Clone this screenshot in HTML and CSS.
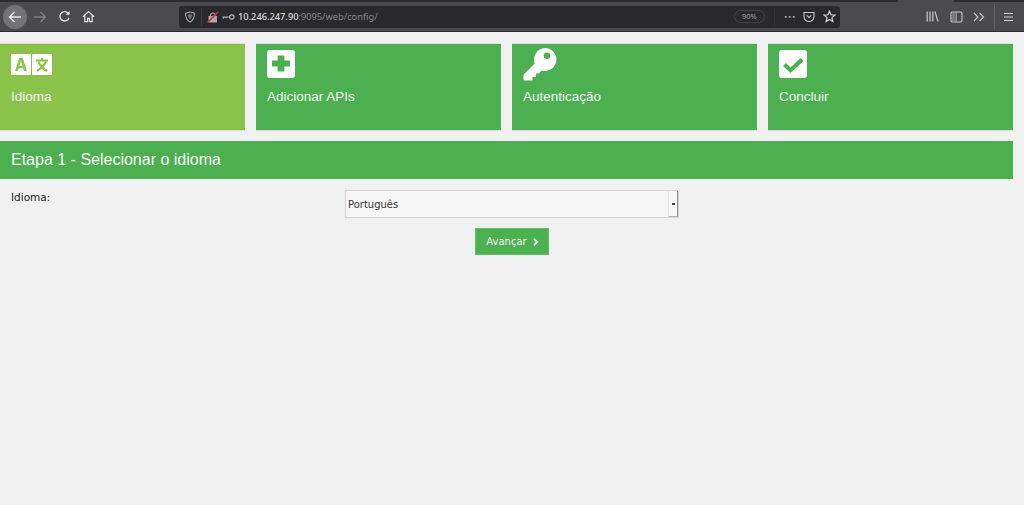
FILE: index.html
```html
<!DOCTYPE html>
<html lang="pt">
<head>
    <meta charset="UTF-8">
    <meta name="viewport" content="width=device-width, initial-scale=1.0">
    <title>Configuração</title>
    <link rel="stylesheet" href="styles.css">
</head>
<body>
    <!-- barra do navegador -->
    <header class="browser">
        <div class="tabstrip"><span class="tab-gap"></span></div>
        <div class="toolbar">
            <span class="back-btn">
                <svg width="16" height="16" viewBox="0 0 16 16" fill="none" stroke="#e8e8e8" stroke-width="1.4"><path d="M14 8H2.5M7.5 3 2.5 8l5 5"/></svg>
            </span>
            <svg class="tool-icon forward" width="16" height="16" viewBox="0 0 16 16" fill="none" stroke="#7f7f84" stroke-width="1.3"><path d="M2 8h11.5M8.5 3l5 5-5 5"/></svg>
            <svg class="tool-icon reload" width="13" height="13" viewBox="0 0 14 14" fill="none" stroke="#e4e4e4" stroke-width="1.5"><path d="M11.8 8.500A5 5 0 1 1 10.6 3.2L12 4.6"/><path d="M12.4 1v4.2H8.2" fill="#e4e4e4" stroke="none"/></svg>
            <svg class="tool-icon home" width="13" height="13" viewBox="0 0 14 14" fill="none" stroke="#e4e4e4" stroke-width="1.3"><path d="M1 7.2 7 1.6l6 5.6M3 6v6.6h3V9h2v3.6h3V6"/></svg>
            <div class="urlbar">
                <svg class="shield" width="12" height="12" viewBox="0 0 12 12" fill="none" stroke="#a9a9ac" stroke-width="1.1"><path d="M1.5 2.2 6 1l4.5 1.2c0 4-1 7-4.500 8.800C2.500 9.200 1.500 6.200 1.500 2.200z"/><path d="M4 3.500h4c0 2-.5 3.500-2 4.800C4.500 7 4 5.500 4 3.500z" fill="#77777a" stroke="none"/></svg>
                <span class="url-sep"></span>
                <svg class="lock" width="12" height="12" viewBox="0 0 12 12"><rect x="1.5" y="5" width="8.5" height="6.5" fill="#a8a8ab"/><path d="M3.5 5V3.800a2.300 2.300 0 0 1 4.500 0V5" fill="none" stroke="#a8a8ab" stroke-width="1.2"/><path d="M0.5 11.500 11 1" stroke="#e0294a" stroke-width="1.5"/></svg>
                <svg class="key" width="13" height="8" viewBox="0 0 13 8" fill="none" stroke="#bcbcbe" stroke-width="1.2"><circle cx="9.8" cy="4" r="2.2"/><path d="M0.5 4h7M1.500 4v1.800M4 4v1.300"/></svg>
                <span class="url"><b>10.246.247.90</b>:9095/web/config/</span>
                <span class="zoom-pill">90%</span>
                <span class="url-sep2"></span>
                <span class="dots">•••</span>
                <svg class="pocket" width="12" height="12" viewBox="0 0 12 12" fill="none" stroke="#c8c8ca" stroke-width="1.1"><path d="M1 1.500h10v4a5 5 0 0 1-10 0z"/><path d="M3.700 4.300 6 6.500l2.300-2.200"/></svg>
                <svg class="star" width="13" height="13" viewBox="0 0 13 13" fill="none" stroke="#d4d4d6" stroke-width="1.2"><path d="M6.500 1.200 8 4.800l3.900.3-3 2.500.95 3.800-3.350-2-3.350 2 .95-3.800-3-2.500 3.900-.3z"/></svg>
            </div>
            <div class="tool-right">
                <svg width="13" height="13" viewBox="0 0 13 13" fill="none" stroke="#c8c8ca" stroke-width="1.2"><path d="M1.200 1.500v10M4 1.500v10M6.800 1.500v10M9 1.500l3 10"/></svg>
                <svg width="13" height="12" viewBox="0 0 13 12" fill="none" stroke="#c8c8ca" stroke-width="1.1"><rect x="1" y="1" width="11" height="10" rx="1.5"/><path d="M6 1.500v9"/><path d="M2 2h4v8H2z" fill="#77777a" stroke="none"/></svg>
                <svg width="12" height="10" viewBox="0 0 12 10" fill="none" stroke="#c8c8ca" stroke-width="1.2"><path d="M1 1l4 4-4 4M6.500 1l4 4-4 4"/></svg>
                <span class="tool-sep"></span>
                <svg width="11" height="10" viewBox="0 0 11 10" stroke="#d4d4d6" stroke-width="1.2"><path d="M1 1.500h9M1 5h9M1 8.500h9"/></svg>
            </div>
        </div>
    </header>

    <main class="page">
        <!-- passos do assistente -->
        <nav class="steps">
            <a class="step step-active">
                <span class="step-icon">
                    <svg width="41" height="21" viewBox="0 0 41 21"><path fill="#fff" fill-rule="evenodd" d="M1 0h18a1 1 0 0 1 1 1v19a1 1 0 0 1-1 1H1a1 1 0 0 1-1-1V1a1 1 0 0 1 1-1zM8.300 4 4 17h2.900l.8-2.700h4.500l.8 2.700H16L11.700 4zM8.400 12l1.500-5h.1l1.500 5z"/><path fill="#fff" d="M22 0h18a1 1 0 0 1 1 1v19a1 1 0 0 1-1 1H22a1 1 0 0 1-1-1V1a1 1 0 0 1 1-1z"/><path fill="none" stroke="#8bc34a" stroke-width="2.2" d="M31 4v3M25 6.500h12M35 7c-1 4-4.500 7-9 10M27.500 8c1.500 3.500 4.500 6.500 8.500 9"/></svg>
                </span>
                <span class="step-label">Idioma</span>
            </a>
            <a class="step">
                <span class="step-icon">
                    <svg width="28" height="28" viewBox="0 0 28 28"><path fill="#fff" fill-rule="evenodd" d="M3 0h22a3 3 0 0 1 3 3v22a3 3 0 0 1-3 3H3a3 3 0 0 1-3-3V3a3 3 0 0 1 3-3zM11.200 5.500a.6.6 0 0 0-.6.6v4.500H5.600a.6.6 0 0 0-.6.600v4.600a.6.6 0 0 0 .6.600h5v4.500a.6.6 0 0 0 .6.600h5.600a.6.6 0 0 0 .6-.6v-4.500h5a.6.6 0 0 0 .6-.6v-4.600a.6.6 0 0 0-.6-.6h-5V6.100a.6.6 0 0 0-.6-.6z"/></svg>
                </span>
                <span class="step-label">Adicionar APIs</span>
            </a>
            <a class="step">
                <span class="step-icon">
                    <svg width="34" height="33" viewBox="0 0 34 33"><path fill="#fff" fill-rule="evenodd" d="M22 0a11.500 11.500 0 1 1-3.500 22.500L16 25.500h-3V29h-3.500v3.500H2a1.500 1.500 0 0 1-1.500-1.500v-3.500c0-.6.200-1 .6-1.400l10.600-10.600A11.500 11.500 0 0 1 22 0zm2 4.500a3.300 3.300 0 1 0 0 6.600 3.300 3.300 0 0 0 0-6.600z"/></svg>
                </span>
                <span class="step-label">Autenticação</span>
            </a>
            <a class="step">
                <span class="step-icon">
                    <svg width="28" height="28" viewBox="0 0 28 28"><path fill="#fff" fill-rule="evenodd" d="M3 0h22a3 3 0 0 1 3 3v22a3 3 0 0 1-3 3H3a3 3 0 0 1-3-3V3a3 3 0 0 1 3-3zM21.500 8 11.500 17.500 7 13l-3 3 7.500 7L24.500 11z"/></svg>
                </span>
                <span class="step-label">Concluir</span>
            </a>
        </nav>

        <h2 class="stage-title">Etapa 1 - Selecionar o idioma</h2>

        <div class="form-row">
            <span class="form-label">Idioma:</span>
            <div class="select">
                <span class="select-value">Português</span>
                <span class="select-arrow"></span>
            </div>
        </div>

        <div class="actions">
            <button class="next-btn">Avançar
                <svg width="6" height="8" viewBox="0 0 6 8" fill="none" stroke="#fff" stroke-width="1.8"><path d="M1 .8 4.200 4 1 7.200"/></svg>
            </button>
        </div>
    </main>
</body>
</html>
```

FILE: styles.css
```css
/* --- base --- */
html, body {
    margin: 0;
    height: 100%;
}

body {
    background-color: #f0f0f0;
    font-family: "DejaVu Sans", sans-serif;
    overflow: hidden;
}

/* --- browser chrome --- */
.browser {
    height: 32px;
    box-sizing: border-box;
    background-color: #4a4a4f;
    border-bottom: 1px solid #2c2c2e;
}

.tabstrip {
    height: 2px;
    background-color: #2b2b2e;
    display: flex;
    justify-content: flex-end;
    padding-right: 70px;
}

.tab-gap {
    width: 56px;
    background-color: #4a4a4f;
}

.toolbar {
    height: 29px;
    display: flex;
    align-items: center;
    padding-left: 3px;
}

.back-btn {
    width: 24px;
    height: 24px;
    border-radius: 50%;
    background-color: #737377;
    display: flex;
    align-items: center;
    justify-content: center;
}

.tool-icon {
    flex: none;
}

.forward {
    margin-left: 5px;
}

.reload {
    margin-left: 10px;
}

.home {
    margin-left: 11px;
}

.urlbar {
    width: 661px;
    height: 22px;
    margin-left: 84px;
    box-sizing: border-box;
    padding: 0 4px 0 5px;
    display: flex;
    align-items: center;
    background-color: #2a2a2d;
    border-radius: 3px;
}

.url-sep {
    width: 1px;
    height: 18px;
    margin: 0 5px;
    background-color: #3c3c3f;
}

.key {
    margin-left: 3px;
}

.url {
    margin-left: 3px;
    color: #86868a;
    font-family: "Noto Sans", sans-serif;
    font-size: 9.25px;
    white-space: nowrap;
}

.url b {
    color: #dcdcde;
    font-weight: 500;
}

.zoom-pill {
    margin-left: auto;
    width: 29px;
    height: 11px;
    border: 1px solid #444448;
    border-radius: 7px;
    color: #a0a0a4;
    font-family: "Noto Sans", sans-serif;
    font-size: 7.5px;
    line-height: 11px;
    text-align: center;
}

.url-sep2 {
    width: 1px;
    height: 18px;
    margin: 0 9px;
    background-color: #323235;
}

.dots {
    color: #c8c8ca;
    font-size: 6px;
    letter-spacing: 0.5px;
}

.pocket {
    margin-left: 7px;
}

.star {
    margin-left: 8px;
}

.tool-right {
    display: flex;
    align-items: center;
    margin-left: 86px;
    gap: 10.5px;
}

.tool-sep {
    width: 1px;
    height: 26px;
    margin: 0 -2px;
    background-color: #606064;
}

/* --- page --- */
.page {
    padding: 11px 11px 0 0;
}

.steps {
    display: grid;
    grid-template-columns: repeat(4, 1fr);
    gap: 11px;
}

.step {
    height: 88px;
    box-sizing: border-box;
    padding: 0 11px;
    background-color: #4caf50;
    border-top: 1px solid #dcdcdc;
    border-bottom: 1px solid #dcdcdc;
    color: #f4f4f4;
    font-family: "Liberation Sans", sans-serif;
    display: flex;
    flex-direction: column;
}

.step-active {
    background-color: #8bc34a;
}

.step-icon {
    height: 40px;
    display: flex;
    align-items: center;
}

.step-label {
    margin-top: 3px;
    font-size: 13.5px;
    line-height: 20px;
}

.stage-title {
    margin: 10px 0 0;
    height: 38px;
    padding-left: 11px;
    background-color: #4caf50;
    color: #f8f8f8;
    font-family: "Liberation Sans", sans-serif;
    font-size: 16px;
    font-weight: normal;
    line-height: 37px;
}

.form-row {
    margin-top: 11px;
    display: flex;
    padding-left: 11px;
}

.form-label {
    width: 334px;
    color: #222;
    font-size: 10.5px;
    line-height: 15px;
}

.select {
    width: 334px;
    height: 28px;
    box-sizing: border-box;
    border: 1px solid #d6d6d6;
    background-color: #f6f6f6;
    display: flex;
    align-items: center;
    justify-content: space-between;
    padding-left: 2px;
    font-size: 10px;
    color: #333;
}

.select-arrow {
    width: 10px;
    height: 26px;
    box-sizing: border-box;
    border-left: 1px solid #e2e2e2;
    border-right: 1px solid #8f8f8f;
    border-bottom: 1px solid #b5b5b5;
    background: linear-gradient(#444, #444) center / 3px 2px no-repeat #f8f8f8;
}

.actions {
    margin-top: 10px;
    padding-left: 11px;
    display: flex;
    justify-content: center;
}

.next-btn {
    width: 74px;
    height: 27px;
    padding: 0 0 0 1px;
    border: 1px solid #5fc063;
    background-color: #4caf50;
    color: #f0f0f0;
    font-family: "DejaVu Sans", sans-serif;
    font-size: 10px;
    display: flex;
    align-items: center;
    justify-content: center;
    gap: 6px;
}
```
